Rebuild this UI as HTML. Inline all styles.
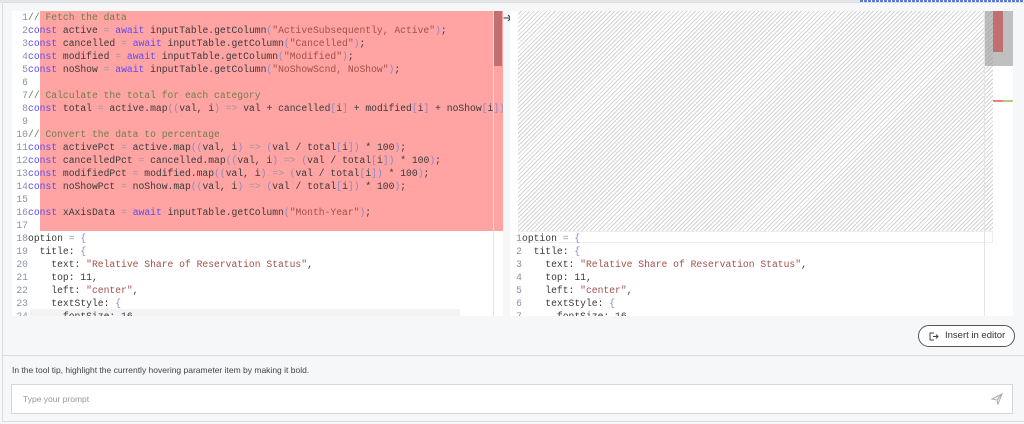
<!DOCTYPE html>
<html><head><style>
*{margin:0;padding:0;box-sizing:border-box}
body{width:1024px;height:424px;overflow:hidden;background:#f6f7f9;font-family:"Liberation Sans",sans-serif;position:relative}
.frame{position:absolute;left:2px;top:2px;width:1030px;height:420px;border:1px solid #dcdde0;background:#f6f7f9}
.topbar{position:absolute;left:0;top:0;width:1024px;height:3px;background:#e6e6e6}
.stripe{position:absolute;left:860px;top:0;width:164px;height:2px;background:repeating-linear-gradient(90deg,#5b7bd5 0 3px,#fff 3px 4px)}
.pane{position:absolute;top:11px;height:305px;background:#fff;overflow:hidden}
.code{position:absolute;left:0;top:0;font-family:"Liberation Mono",monospace;font-size:9.7px;line-height:13px;color:#3a3a3a;white-space:pre}
.ln{display:inline-block;width:28px;text-align:right;color:#8a94a6}
.k{color:#5b4cf0}.s{color:#a0524a}.c{color:#6f7f4a}.p{color:#8a8ac8}.o{color:#9a9a9a}
.red{position:absolute;left:28px;top:0;width:474px;height:220px;background:#ffa3a3}
.hatch{position:absolute;left:8px;top:0;width:475px;height:220px;background:repeating-linear-gradient(135deg,#fff 0 2px,#d2d2d2 2px 3px)}
</style></head><body>
<div class="topbar"></div><div class="stripe"></div>
<div class="frame"></div>
<div class="pane" style="left:12px;width:491px">
 <div class="red"></div>
 <div style="position:absolute;left:481px;top:0;width:9px;height:55px;background:#c07070"></div>
 <div style="position:absolute;left:481px;top:0;width:1px;height:305px;background:#e4e4e4"></div>
 <div style="position:absolute;left:18px;top:298px;width:430px;height:10px;background:#f3f3f3"></div>
 <div class="code" style="left:-12px"><span class="ln">1</span><span class="c">// Fetch the data</span>
<span class="ln">2</span><span class="k">const</span> active <span class="o">=</span> <span class="k">await</span> inputTable.getColumn<span class="p">(</span><span class="s">"ActiveSubsequently, Active"</span><span class="p">)</span>;
<span class="ln">3</span><span class="k">const</span> cancelled <span class="o">=</span> <span class="k">await</span> inputTable.getColumn<span class="p">(</span><span class="s">"Cancelled"</span><span class="p">)</span>;
<span class="ln">4</span><span class="k">const</span> modified <span class="o">=</span> <span class="k">await</span> inputTable.getColumn<span class="p">(</span><span class="s">"Modified"</span><span class="p">)</span>;
<span class="ln">5</span><span class="k">const</span> noShow <span class="o">=</span> <span class="k">await</span> inputTable.getColumn<span class="p">(</span><span class="s">"NoShowScnd, NoShow"</span><span class="p">)</span>;
<span class="ln">6</span>
<span class="ln">7</span><span class="c">// Calculate the total for each category</span>
<span class="ln">8</span><span class="k">const</span> total <span class="o">=</span> active.map<span class="p">((</span>val, i<span class="p">)</span> <span class="o">=&gt;</span> val + cancelled<span class="p">[</span>i<span class="p">]</span> + modified<span class="p">[</span>i<span class="p">]</span> + noShow<span class="p">[</span>i<span class="p">])</span>;
<span class="ln">9</span>
<span class="ln">10</span><span class="c">// Convert the data to percentage</span>
<span class="ln">11</span><span class="k">const</span> activePct <span class="o">=</span> active.map<span class="p">((</span>val, i<span class="p">)</span> <span class="o">=&gt;</span> <span class="p">(</span>val / total<span class="p">[</span>i<span class="p">])</span> * 100<span class="p">)</span>;
<span class="ln">12</span><span class="k">const</span> cancelledPct <span class="o">=</span> cancelled.map<span class="p">((</span>val, i<span class="p">)</span> <span class="o">=&gt;</span> <span class="p">(</span>val / total<span class="p">[</span>i<span class="p">])</span> * 100<span class="p">)</span>;
<span class="ln">13</span><span class="k">const</span> modifiedPct <span class="o">=</span> modified.map<span class="p">((</span>val, i<span class="p">)</span> <span class="o">=&gt;</span> <span class="p">(</span>val / total<span class="p">[</span>i<span class="p">])</span> * 100<span class="p">)</span>;
<span class="ln">14</span><span class="k">const</span> noShowPct <span class="o">=</span> noShow.map<span class="p">((</span>val, i<span class="p">)</span> <span class="o">=&gt;</span> <span class="p">(</span>val / total<span class="p">[</span>i<span class="p">])</span> * 100<span class="p">)</span>;
<span class="ln">15</span>
<span class="ln">16</span><span class="k">const</span> xAxisData <span class="o">=</span> <span class="k">await</span> inputTable.getColumn<span class="p">(</span><span class="s">"Month-Year"</span><span class="p">)</span>;
<span class="ln">17</span>
<span class="ln">18</span>option <span class="o">=</span> <span class="p">{</span>
<span class="ln">19</span>  title: <span class="p">{</span>
<span class="ln">20</span>    text: <span class="s">"Relative Share of Reservation Status"</span>,
<span class="ln">21</span>    top: 11,
<span class="ln">22</span>    left: <span class="s">"center"</span>,
<span class="ln">23</span>    textStyle: <span class="p">{</span>
<span class="ln">24</span>      fontSize: 16,</div>
</div>
<svg style="position:absolute;left:503px;top:14px" width="9" height="8" viewBox="0 0 9 8"><path d="M0.5 4 H8 M5 1 L8 4 L5 7" fill="none" stroke="#333" stroke-width="1"/></svg>
<div class="pane" style="left:510px;width:503px">
 <div class="hatch"></div>
 <div style="position:absolute;left:8px;top:220px;width:475px;height:12px;border:1px solid #eee"></div>
 <div style="position:absolute;left:474px;top:0;width:29px;height:55px;background:rgba(150,150,150,.6)"></div>
 <div style="position:absolute;left:483px;top:0;width:10px;height:41px;background:#c07070"></div>
 <div style="position:absolute;left:483px;top:89px;width:10px;height:2px;background:#f08080"></div>
 <div style="position:absolute;left:493px;top:89px;width:10px;height:2px;background:#b0d080"></div>
 <div style="position:absolute;left:474px;top:0;width:1px;height:305px;background:#e4e4e4"></div>
 <div class="code" style="top:221px;left:-16px"><span class="ln">1</span>option <span class="o">=</span> <span class="p">{</span>
<span class="ln">2</span>  title: <span class="p">{</span>
<span class="ln">3</span>    text: <span class="s">"Relative Share of Reservation Status"</span>,
<span class="ln">4</span>    top: 11,
<span class="ln">5</span>    left: <span class="s">"center"</span>,
<span class="ln">6</span>    textStyle: <span class="p">{</span>
<span class="ln">7</span>      fontSize: 16,</div>
</div>
<div style="position:absolute;left:918px;top:325px;width:97px;height:22px;border:1px solid #555;border-radius:11px;background:#fff;font-size:9.5px;color:#333;line-height:20px;padding-left:26px">Insert in editor<svg style="position:absolute;left:10px;top:6px" width="10" height="9" viewBox="0 0 10 9"><path d="M5 1 H1 V8 H5 M4 4.5 H9 M7 2.5 L9 4.5 L7 6.5" fill="none" stroke="#444" stroke-width="1"/></svg></div>
<div style="position:absolute;left:2px;top:355px;width:1022px;height:1px;background:#dcdde0"></div>
<div style="position:absolute;left:12px;top:365px;font-size:8.5px;color:#444">In the tool tip, highlight the currently hovering parameter item by making it bold.</div>
<div style="position:absolute;left:11px;top:384px;width:1002px;height:30px;background:#fff;border:1px solid #d6d6d6;font-size:8.5px;color:#999;line-height:28px;padding-left:11px">Type your prompt
<svg style="position:absolute;right:9px;top:8px" width="12" height="12" viewBox="0 0 12 12"><path d="M1 6 L11 1 L7 11 L6 7 Z M6 7 L11 1" fill="none" stroke="#aaa" stroke-width="1"/></svg></div>
</body></html>
